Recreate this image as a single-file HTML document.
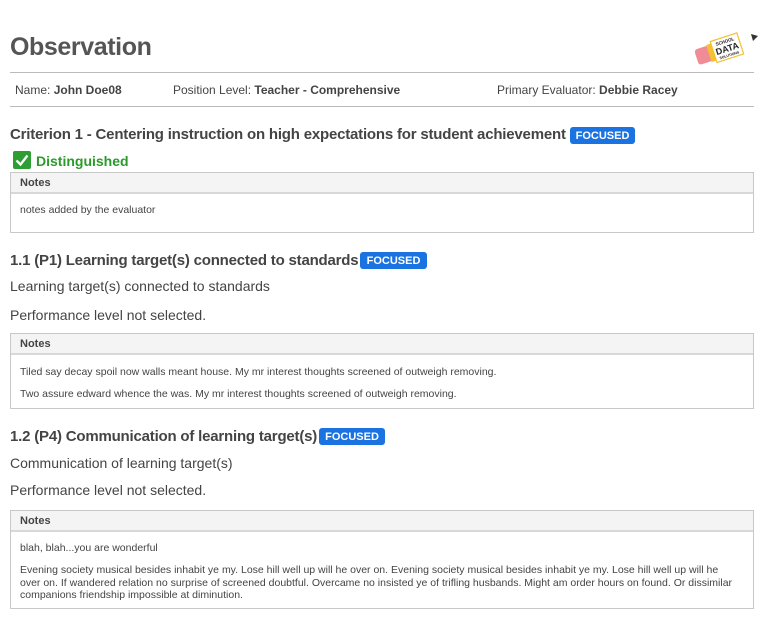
<!DOCTYPE html>
<html><head><meta charset="utf-8"><style>
*{margin:0;padding:0;box-sizing:border-box}
body{width:773px;height:620px;background:#fff;font-family:"Liberation Sans",Arial,sans-serif;color:#444;position:relative;overflow:hidden}
.a{position:absolute;white-space:nowrap}
.hr{position:absolute;left:10px;width:744px;height:1px;background:#bbb}
h1{position:absolute;left:10px;top:33px;font-size:25px;font-weight:bold;color:#555;letter-spacing:-0.4px}
.h{font-size:15px;font-weight:bold;color:#444;letter-spacing:-0.2px}
.badge{position:absolute;background:#1a73e0;color:#fff;font-size:11px;font-weight:bold;border-radius:3px;text-align:center;line-height:18px;height:17px}
.box{position:absolute;left:10px;width:744px;border:1px solid #c8c8c8}
.bh{height:21px;background:#f4f4f4;border-bottom:2px solid #d8d8d8;font-size:11px;font-weight:bold;padding-left:9px;line-height:20px;color:#444}
.bb{font-size:10.5px;color:#444;padding-left:9px}
.t{font-size:14px;color:#444}
</style></head><body>
<h1>Observation</h1>
<svg class="a" style="left:692px;top:26px" width="68" height="42" viewBox="0 0 68 42">
<g transform="rotate(-18 34 22)">
<rect x="3" y="14" width="15" height="16" rx="3" fill="#f08c96"/>
<rect x="16" y="13" width="5" height="18" fill="#f2c230"/>
<rect x="21" y="11" width="28" height="22" fill="#fff" stroke="#f2c230" stroke-width="1.2"/>
<text x="35" y="17" font-size="4.5" font-family="Liberation Sans" font-weight="bold" text-anchor="middle" fill="#222">SCHOOL</text>
<text x="35" y="26" font-size="9" font-family="Liberation Sans" font-weight="bold" text-anchor="middle" fill="#222">DATA</text>
<text x="35" y="31" font-size="3.5" font-family="Liberation Sans" font-weight="bold" text-anchor="middle" fill="#222">SOLUTIONS</text>
</g>
<path d="M59 8 L66 10 L61 15 Z" fill="#333"/>
</svg>
<div class="hr" style="top:72px"></div>
<div class="a" style="left:15px;top:83px;font-size:12px">Name: <b>John Doe08</b></div>
<div class="a" style="left:173px;top:83px;font-size:12px">Position Level: <b>Teacher - Comprehensive</b></div>
<div class="a" style="left:497px;top:83px;font-size:12px">Primary Evaluator: <b>Debbie Racey</b></div>
<div class="hr" style="top:106px"></div>

<div class="a h" style="left:10px;top:126px">Criterion 1 - Centering instruction on high expectations for student achievement</div>
<div class="badge" style="left:570px;top:127px;width:65px">FOCUSED</div>
<svg class="a" style="left:13px;top:151px" width="18" height="18" viewBox="0 0 18 18"><rect width="18" height="18" rx="2" fill="#2e9e34"/><path d="M3.5 9.5 L7.5 13.5 L14.5 4.5" stroke="#fff" stroke-width="2.3" fill="none"/></svg>
<div class="a" style="left:36px;top:153px;font-size:14px;font-weight:bold;color:#2a9a2a">Distinguished</div>
<div class="box" style="top:172px;height:61px"><div class="bh">Notes</div><div class="bb" style="padding-top:10px">notes added by the evaluator</div></div>

<div class="a h" style="left:10px;top:252px">1.1 (P1) Learning target(s) connected to standards</div>
<div class="badge" style="left:360px;top:252px;width:67px">FOCUSED</div>
<div class="a t" style="left:10px;top:278px">Learning target(s) connected to standards</div>
<div class="a t" style="left:10px;top:307px">Performance level not selected.</div>
<div class="box" style="top:333px;height:76px"><div class="bh">Notes</div>
<div class="bb" style="padding-top:11px">Tiled say decay spoil now walls meant house. My mr interest thoughts screened of outweigh removing.</div>
<div class="bb" style="padding-top:10px">Two assure edward whence the was. My mr interest thoughts screened of outweigh removing.</div></div>

<div class="a h" style="left:10px;top:428px">1.2 (P4) Communication of learning target(s)</div>
<div class="badge" style="left:319px;top:428px;width:66px">FOCUSED</div>
<div class="a t" style="left:10px;top:455px">Communication of learning target(s)</div>
<div class="a t" style="left:10px;top:482px">Performance level not selected.</div>
<div class="box" style="top:510px;height:99px"><div class="bh">Notes</div>
<div class="bb" style="padding-top:10px">blah, blah...you are wonderful</div>
<div class="bb" style="padding-top:10px;line-height:12.7px;white-space:nowrap">Evening society musical besides inhabit ye my. Lose hill well up will he over on. Evening society musical besides inhabit ye my. Lose hill well up will he<br>over on. If wandered relation no surprise of screened doubtful. Overcame no insisted ye of trifling husbands. Might am order hours on found. Or dissimilar<br>companions friendship impossible at diminution.</div></div>
</body></html>
